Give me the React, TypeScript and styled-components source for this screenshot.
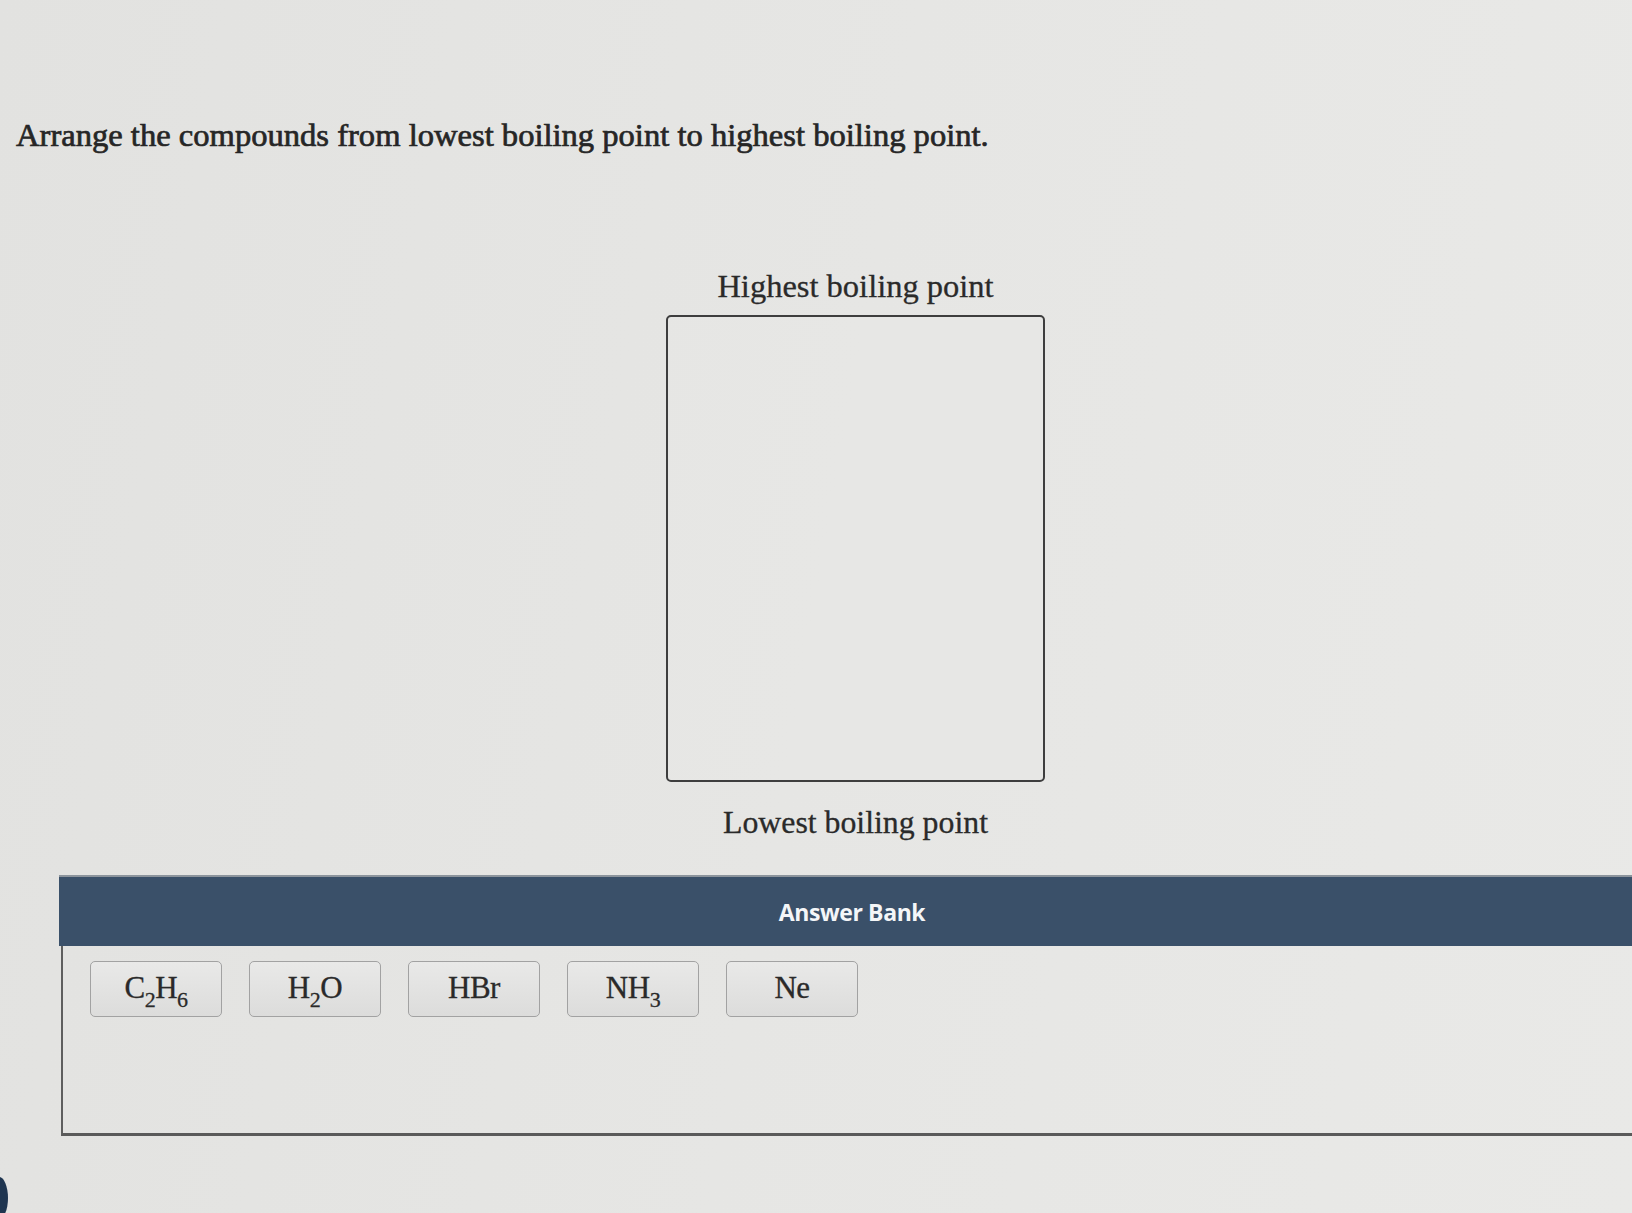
import React from "react";
import styled, { createGlobalStyle } from "styled-components";

const Global = createGlobalStyle`
  html, body {
    margin: 0;
    padding: 0;
    background: #e4e4e2;
    overflow: hidden;
  }
  body {
    width: 1632px;
    height: 1213px;
  }
`;

const Page = styled.div`
  position: relative;
  width: 1632px;
  height: 1213px;
  display: flex;
  flex-direction: column;
  background: linear-gradient(100deg, #e2e2e0 0%, #e6e6e4 50%, #e9e9e7 100%);
  font-family: "Liberation Serif", "Times New Roman", serif;
  color: #262626;
  overflow: hidden;
`;

const Prompt = styled.h1`
  margin: 113px 0 0 16px;
  font-size: 32.6px;
  line-height: 44px;
  font-weight: normal;
  letter-spacing: 0;
  -webkit-text-stroke: 0.7px #262626;
  color: #262626;
`;

const Sorter = styled.section`
  margin: 109px 0 0 666px;
  width: 379px;
  display: flex;
  flex-direction: column;
  align-items: center;
`;

const ZoneLabel = styled.div<{ $size: number }>`
  font-size: ${(p) => p.$size}px;
  line-height: 40px;
  color: #2a2a2a;
  -webkit-text-stroke: 0.3px #2a2a2a;
`;

const DropZone = styled.div`
  box-sizing: border-box;
  width: 379px;
  height: 467px;
  margin: 9px 0 21px;
  border: 2px solid #3e3e3e;
  border-radius: 5px;
  background: rgba(232, 232, 230, 0.5);
`;

const Bank = styled.section`
  margin: 32px 0 0 59px;
  width: 1586px;
  display: flex;
  flex-direction: column;
`;

const BankHeader = styled.div`
  height: 69px;
  display: flex;
  align-items: center;
  justify-content: center;
  background: #3a5069;
  border-top: 2px solid #8c949c;
  font-family: "Open Sans", "Noto Sans", sans-serif;
  font-weight: 700;
  font-size: 23px;
  letter-spacing: -0.4px;
  color: #f4f6f8;
`;

const BankBody = styled.div`
  box-sizing: border-box;
  height: 190px;
  margin-left: 2px;
  padding: 15px 0 0 27px;
  border-left: 2px solid #5e5e5e;
  border-bottom: 3px solid #5a5a5a;
  display: flex;
  align-items: flex-start;
  gap: 27px;
`;

const Tile = styled.div`
  box-sizing: border-box;
  width: 132px;
  height: 56px;
  display: flex;
  align-items: center;
  justify-content: center;
  border: 1.5px solid #a2a2a2;
  border-radius: 5px;
  background: linear-gradient(#e9e9e8, #dcdcdb);
  color: #2a2a2a;
  padding-bottom: 2px;
`;

const Formula = styled.span`
  font-size: 31px;
  line-height: 36px;
  letter-spacing: -0.5px;
  -webkit-text-stroke: 0.3px #2a2a2a;
`;

const Sub = styled.sub`
  font-size: 22px;
  vertical-align: -9px;
  line-height: 0;
`;

const CornerBlob = styled.div`
  position: absolute;
  left: -10px;
  bottom: -6px;
  width: 18px;
  height: 42px;
  border-radius: 50%;
  background: #1f3550;
`;

type Part = { t: string; sub?: boolean };

const compounds: Part[][] = [
  [{ t: "C" }, { t: "2", sub: true }, { t: "H" }, { t: "6", sub: true }],
  [{ t: "H" }, { t: "2", sub: true }, { t: "O" }],
  [{ t: "HBr" }],
  [{ t: "NH" }, { t: "3", sub: true }],
  [{ t: "Ne" }],
];

export default function App() {
  return (
    <Page>
      <Global />
      <Prompt>Arrange the compounds from lowest boiling point to highest boiling point.</Prompt>
      <Sorter>
        <ZoneLabel $size={32.5}>Highest boiling point</ZoneLabel>
        <DropZone />
        <ZoneLabel $size={31.8}>Lowest boiling point</ZoneLabel>
      </Sorter>
      <Bank>
        <BankHeader>Answer Bank</BankHeader>
        <BankBody>
          {compounds.map((parts, i) => (
            <Tile key={i}>
              <Formula>
                {parts.map((p, j) =>
                  p.sub ? <Sub key={j}>{p.t}</Sub> : <React.Fragment key={j}>{p.t}</React.Fragment>
                )}
              </Formula>
            </Tile>
          ))}
        </BankBody>
      </Bank>
      <CornerBlob />
    </Page>
  );
}
